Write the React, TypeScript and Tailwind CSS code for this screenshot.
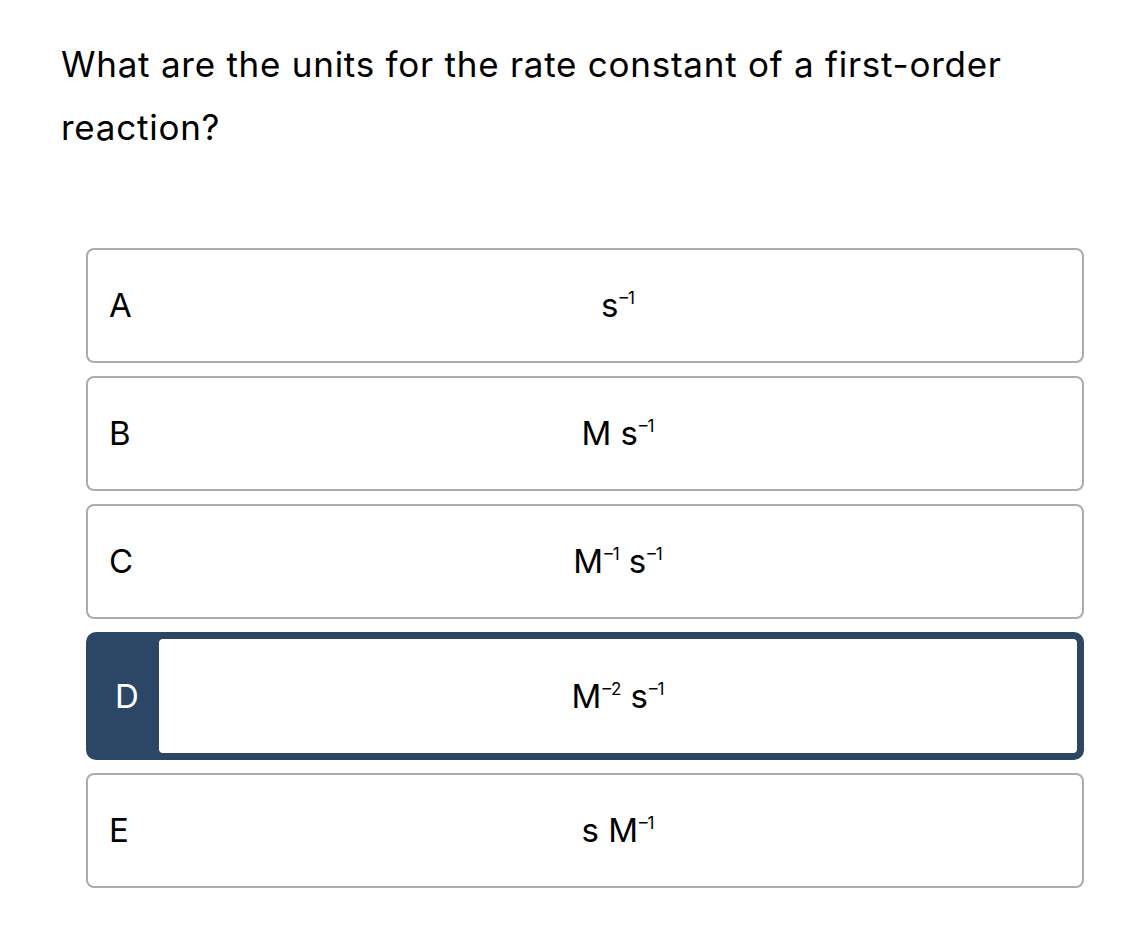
import { ReactNode } from "react"

interface Opcao {
    letra: string
    valor: ReactNode
}

function Sup({ children }: { children: ReactNode }) {
    return <span className="text-[17px] align-[13px] ml-[1px] tracking-normal">{children}</span>
}

const opcoes: Opcao[] = [
    { letra: 'A', valor: <>s<Sup>–1</Sup></> },
    { letra: 'B', valor: <>M s<Sup>–1</Sup></> },
    { letra: 'C', valor: <>M<Sup>–1</Sup> s<Sup>–1</Sup></> },
    { letra: 'D', valor: <>M<Sup>–2</Sup> s<Sup>–1</Sup></> },
    { letra: 'E', valor: <>s M<Sup>–1</Sup></> },
]

function CardOpcao({ opcao, selecionada }: { opcao: Opcao; selecionada: boolean }) {
    if (selecionada) {
        return (
            <div className='h-[128px] flex rounded-[10px] border-[7px] border-[#2c4766] bg-[#2c4766]'>
                <div className='w-[66px] shrink-0 flex items-center pl-[22px] text-white'>
                    {opcao.letra}
                </div>
                <div className='grow flex items-center justify-center bg-white rounded-[4px] text-black'>
                    <span>{opcao.valor}</span>
                </div>
            </div>
        )
    }
    return (
        <div className='h-[115px] flex rounded-[8px] border-2 border-[#ababab] bg-white'>
            <div className='w-[66px] shrink-0 flex items-center pl-[21px] text-black'>
                {opcao.letra}
            </div>
            <div className='grow flex items-center justify-center text-black'>
                <span>{opcao.valor}</span>
            </div>
        </div>
    )
}

export default function App() {
    return (
        <div className='min-h-[938px] bg-white px-[61px] pt-[33px] font-["Inter",sans-serif]'>
            <p className='text-[35px] leading-[63px] tracking-[0.75px] text-black max-w-[1000px]'>
                What are the units for the rate constant of a first-order reaction?
            </p>
            <div className='mt-[89px] ml-[25px] w-[998px] flex flex-col gap-[13px] text-[33px] leading-none'>
                {opcoes.map((op) => (
                    <CardOpcao key={op.letra} opcao={op} selecionada={op.letra === 'D'} />
                ))}
            </div>
        </div>
    )
}
